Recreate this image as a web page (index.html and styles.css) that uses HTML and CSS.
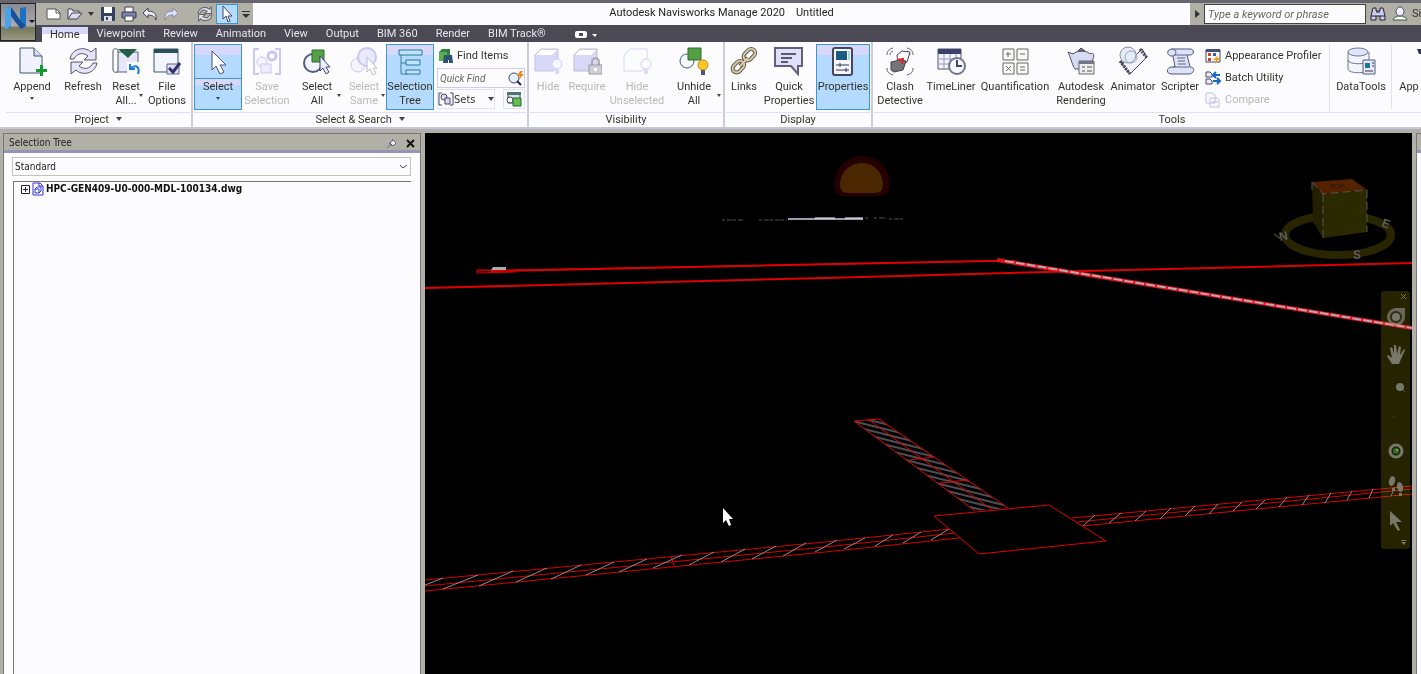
FILE: index.html
```html
<!DOCTYPE html>
<html lang="en">
<head>
<meta charset="utf-8">
<title>Autodesk Navisworks Manage 2020 - Untitled</title>
<link rel="stylesheet" href="styles.css">
</head>
<body>
<div class="app">
  <header class="top">
    <button class="logo" aria-label="Application menu">
      <svg width="34" height="34" viewBox="0 0 34 34"><path d="M4 3l6-1 9 13V3l6-1v19l-5 3-10-13v11l-6 3z" fill="#1f6fc4"/><path d="M4 3l6-1v19l-6 4z" fill="#4aa3e8"/><path d="M10 2l9 13 6 6-5 3L10 11z" fill="#165199"/><path d="M28 15h6l-3 3z" fill="#111"/></svg>
    </button>
    <div class="titlebar">
      <div class="quick">
        <button aria-label="New"><svg width="16" height="16" viewBox="0 0 16 16"><path d="M1 3h9l4 4v6H1z" fill="#fff" stroke="#555"/><path d="M10 3v4h4" fill="none" stroke="#555"/></svg></button>
        <button aria-label="Open"><svg width="16" height="16" viewBox="0 0 16 16"><path d="M1 13V3h4l1 2h6v2" fill="#eef" stroke="#445"/><path d="M1 13l4-6h10l-5 6z" fill="#dde" stroke="#445"/></svg></button>
        <button class="narrow" aria-label="Open options"><svg width="6" height="4" viewBox="0 0 6 4"><path d="M0 0h6L3 4z" fill="#333"/></svg></button>
        <button aria-label="Save"><svg width="16" height="16" viewBox="0 0 16 16"><path d="M1 1h14v14H1z" fill="#33405e"/><path d="M4 1h8v6H4z" fill="#fff"/><path d="M4 10h8v5H4z" fill="#dde"/><path d="M6 11h2v3H6z" fill="#33405e"/></svg></button>
        <button aria-label="Print"><svg width="16" height="16" viewBox="0 0 16 16"><path d="M4 6V1h8v5" fill="#fff" stroke="#445"/><rect x="1" y="6" width="14" height="6" rx="1" fill="#7b86b0" stroke="#334"/><path d="M4 10h8v5H4z" fill="#fff" stroke="#445"/></svg></button>
        <button aria-label="Undo"><svg width="16" height="16" viewBox="0 0 16 16"><path d="M1 7l5-5v3c6 0 9 3 8 9-1-3-3-5-8-5v3z" fill="#e8e8ff" stroke="#444"/></svg></button>
        <button aria-label="Redo"><svg width="16" height="16" viewBox="0 0 16 16"><path d="M15 7l-5-5v3C4 5 1 8 2 14c1-3 3-5 8-5v3z" fill="#ddf" stroke="#8a8a98"/></svg></button>
        <button class="spaced" aria-label="Refresh"><svg width="16" height="16" viewBox="0 0 30 30"><path d="M2 13C4 2 17 0 23 6l4-4v12H15l4-4C14 6 8 7 6 13zM28 17C26 28 13 30 7 24l-4 4V16h12l-4 4c5 4 11 3 13-3z" fill="#e4e4f8" stroke="#666" stroke-width="2"/></svg></button>
        <button class="active" aria-label="Select"><svg width="16" height="18" viewBox="0 0 16 18"><path d="M4 1v13l3-3 2 6 2-1-2-5h4z" fill="#fff" stroke="#446"/></svg></button>
        <button class="narrow" aria-label="Customize toolbar"><svg width="8" height="7" viewBox="0 0 8 7"><path d="M0 0h8v1H0zM0 3h8L4 7z" fill="#333"/></svg></button>
      </div>
      <h1>Autodesk Navisworks Manage 2020 &nbsp;&nbsp; Untitled</h1>
      <div class="help">
        <button class="expand" aria-label="Collapse search"><svg width="5" height="8" viewBox="0 0 5 8"><path d="M0 0l5 4-5 4z" fill="#333"/></svg></button>
        <input type="text" aria-label="Search help" placeholder="Type a keyword or phrase">
        <button aria-label="Search"><svg width="16" height="16" viewBox="0 0 16 16"><path d="M3 2h3v3h4V2h3l2 8v4h-5v-4H6v4H1v-4z" fill="#cce" stroke="#223"/><path d="M1 10h5M10 10h5M6 6h4" stroke="#223"/></svg></button>
        <button class="sign" aria-label="Sign in"><svg width="16" height="16" viewBox="0 0 16 16"><path d="M1 14c0-3 4-3 5-4h4c1 1 5 1 5 4z" fill="#fff" stroke="#375a44"/><ellipse cx="8" cy="5.500" rx="4" ry="4.500" fill="#eef" stroke="#446"/></svg><span>Si</span></button>
      </div>
    </div>
    <nav class="tabs">
      <button class="current">Home</button><button>Viewpoint</button><button>Review</button><button>Animation</button><button>View</button><button>Output</button><button>BIM 360</button><button>Render</button><button>BIM Track®</button>
      <button class="display-mode" aria-label="Ribbon display"><svg width="22" height="8" viewBox="0 0 22 8"><rect y="1" width="12" height="7" rx="2" fill="#fff"/><rect x="4" y="3" width="4" height="3" fill="#4a4954"/><path d="M17 4h5l-2 3z" fill="#fff"/></svg></button>
    </nav>
  </header>

  <div class="ribbon">
    <section class="group">
      <div class="tools">
        <button class="tool w52"><svg viewBox="0 0 30 30"><path d="M3 2h14l8 8v17H3z" fill="#f0f2ff" stroke="#3b5870"/><path d="M17 2v8h8" fill="#d8d8ff" stroke="#3b5870"/><path d="M23 19h3v4h4v3h-4v4h-3v-4h-4v-3h4z" fill="#159a2c"/></svg><span>Append</span><i class="caret"></i></button>
        <button class="tool w50"><svg viewBox="0 0 30 30"><path d="M2 13C4 2 17 0 23 6l5-4v12H16l4-4C15 6 9 7 6 13zM29 17C27 28 14 30 8 24l-5 4V16h12l-4 4c5 4 11 3 14-3z" fill="#e4e4f8" stroke="#555566"/></svg><span>Refresh</span></button>
        <button class="tool w36"><svg viewBox="0 0 30 30"><path d="M5 6h22v20H5z" fill="#e6e8fa" stroke="#52607a"/><path d="M2 24V5c0-3 5-3 5 0v19c0 3-5 3-5 0z" fill="#fff" stroke="#445070"/><path d="M7 3h19l-9 9z" fill="#236045"/><path d="M16 16h14v14H16z" fill="#fbfbff"/><path d="M20 22c6-4 9 0 7 6M19 18v5h5" fill="none" stroke="#187bd8" stroke-width="2"/></svg><span>Reset<br>All...</span><i class="caret side"></i></button>
        <button class="tool w46"><svg viewBox="0 0 30 30"><path d="M2 3h24v23H2z" fill="#f4f4ff" stroke="#385868"/><path d="M2 3h24v4H2z" fill="#28505c"/><path d="M15 18h12v10H15z" fill="#ddddf6" stroke="#667"/><path d="M17 22l4 4 7-9" fill="none" stroke="#303070" stroke-width="3"/></svg><span>File<br>Options</span></button>
      </div>
      <button class="caption">Project <i class="caret"></i></button>
    </section>

    <section class="group">
      <div class="tools">
        <button class="tool w48 on split"><svg viewBox="0 0 30 30"><path d="M9 5v19l4-4 4 8 4-2-4-7h6z" fill="#fff" stroke="#505078"/></svg><span>Select</span><i class="caret"></i></button>
        <button class="tool w50" disabled><svg viewBox="0 0 30 30"><path d="M7 3H2v25h5M23 3h5v25h-5" fill="none" stroke="#c8c8f4" stroke-width="2"/><circle cx="10" cy="16" r="5" fill="#f4f4ff" stroke="#c8c8f0"/><path d="M9 18h10v9H9z" fill="#eeeeff" stroke="#c8c8f0"/><circle cx="20" cy="10" r="4" fill="#fff" stroke="#c8c8f0" stroke-width="3"/></svg><span>Save<br>Selection</span></button>
        <button class="tool w50"><svg viewBox="0 0 30 30"><circle cx="11" cy="17" r="9" fill="#f4f4ff" stroke="#506078" stroke-width="2"/><path d="M10 4h12v12H10z" fill="#55a045" stroke="#2c6b2c"/><path d="M18 10v15l3-3 3 6 3-2-3-5h4z" fill="#eef" stroke="#404078"/></svg><span>Select<br>All</span><i class="caret side"></i></button>
        <button class="tool w44" disabled><svg viewBox="0 0 30 30"><circle cx="9" cy="19" r="7" fill="#f4f4ff" stroke="#c8c8f0"/><circle cx="18" cy="11" r="9" fill="#eaeaff" stroke="#c8c8f0" stroke-width="2"/><path d="M18 11v15l3-3 3 6 3-2-3-5h4z" fill="#fff" stroke="#bbc"/></svg><span>Select<br>Same</span><i class="caret side"></i></button>
        <button class="tool w48 on"><svg viewBox="0 0 30 30"><path d="M6 9v19h7M6 17h7" fill="none" stroke="#3580a0"/><path d="M4 4h23v5H4zM11 14h14v5H11zM11 24h14v4H11z" fill="#bfe4fb" stroke="#287ba0"/></svg><span>Selection<br>Tree</span></button>
        <div class="finder">
          <button class="row"><svg viewBox="0 0 16 16"><path d="M2 4l3-3h8v9l-3 3H2z" fill="#2f8140"/><path d="M2 4h8v9H2z" fill="#58b052"/><path d="M7 7h3l1 2 1-2h3l1 8h-4v-3h-1v3H6z" fill="#2c5078"/></svg>Find Items</button>
          <label class="quickfind"><input type="text" aria-label="Quick Find" placeholder="Quick Find"><svg viewBox="0 0 16 16"><circle cx="6" cy="8" r="5" fill="#e4f2ff" stroke="#446"/><path d="M9 11l4 4" stroke="#225" stroke-width="2"/><path d="M12 1l-3 5h3l-1 4 5-6h-3l2-3z" fill="#f08a18"/></svg></label>
          <div class="sets">
            <button class="setsbox"><svg viewBox="0 0 16 16"><path d="M4 2H1v12h3M12 2h3v12h-3" fill="none" stroke="#446"/><circle cx="6" cy="6" r="3" fill="#dde" stroke="#446"/><path d="M7 7h5v6H7z" fill="#dde" stroke="#446"/></svg>Sets<i class="caret"></i></button>
            <button class="manage" aria-label="Manage sets"><svg viewBox="0 0 16 16"><path d="M2 2h12v10H2z" fill="#dde" stroke="#446"/><path d="M1 1h14v3H1z" fill="#4a7870"/><circle cx="4" cy="9" r="3" fill="#fff" stroke="#446"/><path d="M7 7h8v8H7z" fill="#63bd50" stroke="#256b30"/></svg></button>
          </div>
        </div>
      </div>
      <button class="caption">Select &amp; Search <i class="caret"></i></button>
    </section>

    <section class="group">
      <div class="tools">
        <button class="tool w36" disabled><svg viewBox="0 0 30 30"><path d="M2 9l6-6h17v16l-5 6H2z" fill="#d8d8f8" stroke="#c4c4de"/><path d="M3 9l5-5h16l-5 5z" fill="#fff"/><circle cx="24" cy="18" r="5" fill="#f6f6ff" stroke="#d0d0f4"/><path d="M22 23h4v5h-4z" fill="#d6d6f8"/></svg><span>Hide</span></button>
        <button class="tool w42" disabled><svg viewBox="0 0 30 30"><path d="M2 9l6-6h17v16l-5 6H2z" fill="#d8d8f8" stroke="#bdbdcc"/><path d="M3 9l5-5h16l-5 5z" fill="#fff"/><path d="M20 20v-4c0-5 7-5 7 0v4" fill="none" stroke="#aaa" stroke-width="2"/><path d="M17 19h13v9H17z" fill="#d0d0dc" stroke="#999"/><path d="M22 22h3v3h-3z" fill="#fff"/></svg><span>Require</span></button>
        <button class="tool w58" disabled><svg viewBox="0 0 30 30"><path d="M2 9l6-6h17v16l-5 6H2z" fill="#fcfcff" stroke="#d4d4fa"/><circle cx="24" cy="18" r="5" fill="#fcfcff" stroke="#d0d0f4"/><path d="M22 23h4v5h-4z" fill="#dcdcf8"/></svg><span>Hide<br>Unselected</span></button>
        <button class="tool w56"><svg viewBox="0 0 30 30"><circle cx="8" cy="15" r="7" fill="#f4f8ff" stroke="#446070"/><path d="M9 2h13v12H9z" fill="#55a045" stroke="#2c6b2c"/><circle cx="24" cy="19" r="5" fill="#ffc928" stroke="#c88510"/><path d="M22 24h4v5h-4z" fill="#555570"/></svg><span>Unhide<br>All</span><i class="caret side"></i></button>
      </div>
      <div class="caption">Visibility</div>
    </section>

    <section class="group">
      <div class="tools">
        <button class="tool w36"><svg viewBox="0 0 30 30"><g fill="none" stroke="#5d584c" stroke-width="4"><rect x="14" y="5" width="13" height="8" rx="4" transform="rotate(-45 20 9)"/><rect x="3" y="17" width="13" height="8" rx="4" transform="rotate(-45 9 21)"/><path d="M11 20l8-8"/></g><g fill="none" stroke="#d9ccaa" stroke-width="2"><rect x="14" y="5" width="13" height="8" rx="4" transform="rotate(-45 20 9)"/><rect x="3" y="17" width="13" height="8" rx="4" transform="rotate(-45 9 21)"/><path d="M11 20l8-8"/></g></svg><span>Links</span></button>
        <button class="tool w54"><svg viewBox="0 0 30 30"><path d="M1 2h27v18h-4v8l-7-8H1z" fill="#e0e0f8" stroke="#60607c" stroke-width="2"/><path d="M7 8h15M7 12h11M7 16h7" stroke="#5b5b78" stroke-width="2"/></svg><span>Quick<br>Properties</span></button>
        <button class="tool w54 on"><svg viewBox="0 0 30 30"><rect x="5" y="2" width="19" height="27" rx="2" fill="#f6f6ff" stroke="#44465c" stroke-width="2"/><path d="M8 5h11v9H8z" fill="#1a5d82"/><path d="M20 5h2v9h-2z" fill="#a8d8ee"/><path d="M8 19h13M8 24h13M12 17v4M18 22v4" stroke="#333350"/></svg><span>Properties</span></button>
      </div>
      <div class="caption">Display</div>
    </section>

    <section class="group wide">
      <div class="tools">
        <button class="tool w52"><svg viewBox="0 0 30 30"><path d="M2 9c0-4 2-6 6-7M5 9c0-2 1-3 3-4M22 2c4 1 6 3 6 7M22 5c2 1 3 2 3 4M2 22c0 4 2 6 6 7M28 22c0 4-2 6-6 7" fill="none" stroke="#555570"/><path d="M12 9l5-4 8 1-3 10-9 3z" fill="#fff" stroke="#446"/><path d="M6 16l9-2 6 1-3 9-9 2-3-2z" fill="#73737c" stroke="#444"/><path d="M12 14l6-1-1 5" fill="none" stroke="#d22" stroke-width="2"/></svg><span>Clash<br>Detective</span></button>
        <button class="tool w50"><svg viewBox="0 0 30 30"><path d="M2 3h23v20H2z" fill="#f3f3ff" stroke="#556"/><path d="M2 3h23v5H2z" fill="#3c426c"/><path d="M2 13h23M2 18h23M8 8v15M14 8v15M20 8v15" stroke="#9a9ab8"/><circle cx="21" cy="20" r="8" fill="#f5f8ff" stroke="#74788c" stroke-width="2"/><path d="M21 14v6h5" fill="none" stroke="#446" stroke-width="2"/></svg><span>TimeLiner</span></button>
        <button class="tool w78"><svg viewBox="0 0 30 30"><g fill="#fafafa" stroke="#66665c"><path d="M3 3h11v11H3zM17 3h11v11H17zM3 17h11v11H3zM17 17h11v11H17z"/><path d="M6 8h5M8 6v5M20 8h5M6 20l5 5M11 20l-5 5M20 21h5M20 24h5"/></g></svg><span>Quantification</span></button>
        <button class="tool w54"><svg viewBox="0 0 30 30"><path d="M2 6l5 2c4-4 14-4 17 0 5-3 5 5 0 9l-4 6H9C6 19 6 15 2 6z" fill="#d8daf0" stroke="#4c5064"/><path d="M12 5l3-3 4 3z" fill="#777d98" stroke="#445"/><path d="M13 15h15v13H13z" fill="#eee" stroke="#666678"/><path d="M13 15h15v3H13z" fill="#74748a"/><path d="M16 21h3M21 21h5M16 25h3M21 25h5" stroke="#555"/></svg><span>Autodesk<br>Rendering</span></button>
        <button class="tool w50"><svg viewBox="0 0 30 30"><path d="M14 13L24 3l5 8-17 17-9-11z" fill="#f2f2ff" stroke="#44465c"/><path d="M2 15l10 13M22 3l7 9" stroke="#445" stroke-width="3" stroke-dasharray="2 1"/><circle cx="10" cy="9" r="8" fill="#e4ecfa" stroke="#8b94a8"/><circle cx="13" cy="11" r="6" fill="none" stroke="#9ba4ba"/></svg><span>Animator</span></button>
        <button class="tool w44"><svg viewBox="0 0 30 30"><path d="M7 3h18c5 0 4 6 0 6h-3l3 12c6 0 4 7-1 7H7c-6 0-6-6-1-7h4L8 10H6C1 9 2 3 7 3z" fill="#e0e2fa" stroke="#4d5878"/><path d="M7 3c5 0 5 6 1 7M22 9H9M24 21H8M12 12h8M13 15h7M13 18h8" fill="none" stroke="#596480"/></svg><span>Scripter</span></button>
        <div class="stack">
          <button class="row"><svg viewBox="0 0 16 16"><path d="M1 2h14v12H1z" fill="#fff" stroke="#445"/><path d="M1 1h14v3H1z" fill="#445070"/><path d="M3 5h3v3H3zM3 10h3v3H3z" fill="#d04030"/><path d="M8 5h3v3H8z" fill="#3858b8"/><path d="M13 7l-5 5h3l-1 4 5-6h-3z" fill="#f49a20"/></svg>Appearance Profiler</button>
          <button class="row"><svg viewBox="0 0 16 16"><path d="M1 2h4l2 2v3H1zM1 9h4l2 2v3H1z" fill="#eef" stroke="#446"/><path d="M15 5H9m2-3L8 5l3 3M8 11h6m-2-3l3 3-3 3" fill="none" stroke="#1767c8" stroke-width="2"/></svg>Batch Utility</button>
          <button class="row" disabled><svg viewBox="0 0 16 16"><path d="M1 1h7l2 2v8H1zM5 6h7l2 2v7H5z" fill="#f8f8ff" stroke="#c4c4d8"/><path d="M7 10h5" stroke="#ccf" stroke-width="2"/></svg>Compare</button>
        </div>
        <button class="tool w60"><svg viewBox="0 0 30 30"><path d="M2 6v17c0 5 21 5 21 0V6" fill="#f4f6ff" stroke="#6c7890"/><path d="M2 14c0 5 21 5 21 0" fill="none" stroke="#6c7890"/><ellipse cx="12" cy="6" rx="10" ry="4" fill="#e0e6fa" stroke="#6c7890"/><path d="M17 14h12v14H17z" fill="#e8e8f8" stroke="#555b78"/><path d="M19 17h5v5h-5z" fill="#187a98"/><path d="M26 17h2M26 20h2M19 25h8" stroke="#335"/></svg><span>DataTools</span></button>
        <button class="tool w36 edge"><svg viewBox="0 0 30 30"><path d="M23 3h7v5h-5z" fill="#335"/></svg><span>App</span></button>
      </div>
      <div class="caption">Tools</div>
    </section>
  </div>

  <main class="work">
    <aside class="dock">
      <h2>Selection Tree
        <span class="actions">
          <button aria-label="Auto hide"><svg width="11" height="11" viewBox="0 0 11 11"><path d="M1 10l3-3M3 5l3 3M4 5l3-3 3 3-3 3zM6 1l4 4" fill="#eee" stroke="#667"/></svg></button>
          <button aria-label="Close"><svg width="9" height="9" viewBox="0 0 9 9"><path d="M1 1l7 7M8 1L1 8" stroke="#111" stroke-width="2"/></svg></button>
        </span>
      </h2>
      <div class="selectwrap"><select aria-label="Tree view"><option>Standard</option><option>Compact</option><option>Properties</option></select><svg width="9" height="6" viewBox="0 0 9 6"><path d="M1 1l3 3 4-3" fill="none" stroke="#446"/></svg></div>
      <ul class="tree">
        <li><svg width="9" height="9" viewBox="0 0 9 9"><path d="M.5.500h8v8h-8zM2 4.500h5M4.500 2v5" fill="none" stroke="#222"/></svg><svg width="12" height="14" viewBox="0 0 12 14"><path d="M1 1h7l3 3v9H1z" fill="#fff" stroke="#3434d8"/><path d="M7 1v3h4" fill="none" stroke="#3434d8"/><path d="M3 7l2-2h4v4l-2 2H3zM3 7h4v4" fill="none" stroke="#3434d8"/></svg><span>HPC-GEN409-U0-000-MDL-100134.dwg</span></li>
      </ul>
    </aside>

    <div class="viewport">
      <svg class="scene" viewBox="0 0 987 541" preserveAspectRatio="xMinYMin slice" role="img" aria-label="3D model">
        <defs><pattern id="hatch" width="20" height="5" patternUnits="userSpaceOnUse" patternTransform="rotate(14)"><path d="M0 1h20" stroke="#9c9cac"/></pattern></defs>
        <path d="M409 51c0-15 12-28 28-28s28 13 28 28c0 9-4 12-12 12h-32c-8 0-12-3-12-12z" fill="#240000"/>
        <path d="M415 50c1-11 10-20 22-20s20 9 21 20c0 7-2 10-9 10h-25c-7 0-9-3-9-10z" fill="#4a2700"/>
        <path d="M297 87h21M334 87h28M440 85h5M449 85h12M464 86h14" stroke="#55555c" stroke-dasharray="3 2 5 1"/>
        <path d="M363 86h75" stroke="#9a9ab0" stroke-width="2"/><path d="M390 85h20M420 85h18" stroke="#fff"/>
        <g fill="none" stroke="#e00000">
          <path d="M52 137h14M52 137v3l39-1M52 138l39-1L575 128l18 1"/>
          <path d="M66 138L560 128h30" stroke-width="2"/>
          <path d="M0 155L400 145 660 138 987 130" stroke-width="2"/>
        </g>
        <path d="M66 137l2-3h13v3z" fill="#aaaab4"/>
        <path d="M572 127L987 195" stroke="#e01018" stroke-width="4"/><path d="M580 128L987 195" stroke="#b8a8b4" stroke-width="2" stroke-dasharray="9 2"/>
        <path d="M429 288l25-2 129 89-33 3z" fill="url(#hatch)"/>
        <path d="M429 288l25-2 129 89M429 288l121 90M444 287l123 90M485 327l23-3M515 350l28-3" fill="none" stroke="#e00000"/>
        <path d="M0 447L400 409 525 396M0 453L400 414 530 400M0 458L400 419 534 405M246 423l3 10M647 385l340-32M652 389l335-33M657 393l330-32" fill="none" stroke="#d80000"/>
        <path d="M0 452l18-7M18 456l35-14M54 453l34-15M91 449l31-14M126 446l30-14M161 442l28-13M194 439l28-13M228 435l29-13M264 432l25-13M296 429l24-13M327 426l24-13M358 423l23-13M390 419l22-12M419 416l21-11M450 413l18-11M478 410l18-11M506 407l18-11M658 393l12-11M684 390l12-10M710 388l11-10M735 386l11-11M760 383l10-10M784 381l9-10M808 378l9-9M831 376l9-9M854 374l8-10M877 372l7-10M900 370l6-10M922 367l5-9M944 365l4-9M966 363l4-9" fill="none" stroke="#8c8c9a"/>
        <path d="M509 383l115-11 57 36-127 13z" fill="#000" stroke="#e00000"/>
        <path d="M298 375v15l3-3 3 6 2-1-2-6h4z" fill="#fff"/>
      </svg>
      <svg class="cube" width="130" height="90" viewBox="0 0 130 90" role="img" aria-label="View cube">
        <ellipse cx="66" cy="60" rx="53" ry="20" fill="none" stroke="#282600" stroke-width="8"/>
        <path d="M40 7l11 12v44L41 47z" fill="#222000"/><path d="M51 19l44-4v42l-44 6z" fill="#2b2900"/><path d="M40 7l40-3 15 11-44 4z" fill="#552200"/>
        <path d="M40 7l11 12 44-4M51 19v44M95 15v42M40 7v12" fill="none" stroke="#55555a" stroke-dasharray="8 4"/>
        <text x="58" y="14" font-size="7" fill="#2a1800">TOP</text>
        <g font-size="12" font-weight="bold" fill="#5c5c60"><text transform="translate(8 66) rotate(-12)">N</text><text transform="translate(109 51) rotate(20)">E</text><text x="81" y="84">S</text></g>
        <path d="M2 59l7 5" stroke="#3b391c" stroke-width="2"/>
      </svg>
      <nav class="navbar" aria-label="Navigation bar">
        <button class="h10" aria-label="Close"><svg width="5" height="5" viewBox="0 0 5 5"><path d="M0 0l5 5M5 0L0 5" stroke="#77775c"/></svg></button>
        <button class="h32" aria-label="Steering wheel"><svg width="20" height="20" viewBox="0 0 20 20"><path d="M10 1h9v9a9 9 0 1 1-9-9z" fill="#68685a"/><circle cx="10" cy="10" r="5" fill="#77776a" stroke="#2e2c10" stroke-width="2"/></svg></button>
        <button class="h44" aria-label="Pan"><svg width="20" height="20" viewBox="0 0 20 20"><path d="M6 19l-5-8 1-1 4 3-2-10 2-1 2 7V0h2l1 9 2-8 2 1-1 8 4-6 1 1-4 9-2 5z" fill="#77776a"/></svg></button>
        <button class="h20 right" aria-label="Zoom"><svg width="12" height="10" viewBox="0 0 12 10"><circle cx="6" cy="5" r="4" fill="#77776a"/><path d="M9 8l2 2" stroke="#555540"/></svg></button>
        <button class="h40" aria-label="Zoom options"><svg width="6" height="2" viewBox="0 0 6 2"><path d="M0 1h2" stroke="#444420"/></svg></button>
        <button class="h28" aria-label="Orbit"><svg width="18" height="18" viewBox="0 0 18 18"><circle cx="9" cy="9" r="6" fill="#152508" stroke="#77776a" stroke-width="3"/><circle cx="9" cy="9" r="3" fill="#3b6620"/><circle cx="10" cy="8" r="1" fill="#9a9"/></svg></button>
        <button class="h42" aria-label="Walk"><svg width="18" height="20" viewBox="0 0 18 20"><ellipse cx="5" cy="5" rx="3" ry="5" transform="rotate(15 5 5)" fill="#77776a"/><ellipse cx="13" cy="11" rx="3" ry="5" transform="rotate(-15 13 11)" fill="#77776a"/><path d="M5 12h3v3H5zM12 17h3v3h-3z" fill="#77776a"/></svg></button>
        <button class="h28" aria-label="Select"><svg width="14" height="20" viewBox="0 0 14 20"><path d="M1 0v15l3-3 5 8 2-1-4-8h6z" fill="#77776a"/></svg></button>
        <button class="h14" aria-label="More"><svg width="5" height="5" viewBox="0 0 5 5"><path d="M0 0h5v1H0zM0 2h5L3 5z" fill="#77775c"/></svg></button>
      </nav>
    </div>
    <aside class="dock next"><h2></h2></aside>
  </main>
</div>
</body>
</html>
```
FILE: styles.css
```css
* { box-sizing: border-box; }
body { margin: 0; font: 11px/14px Roboto, "Noto Sans", sans-serif; color: #33332b; }
button { font: inherit; color: inherit; background: none; border: 0; padding: 0; margin: 0; }
svg { flex: none; display: block; }
h1, h2 { margin: 0; font-weight: 400; font-size: 11px; }
.app { display: flex; flex-direction: column; height: 100vh; overflow: hidden; background: #b0b0a6; }

.top { display: grid; grid-template: 22px 17px / 36px 1fr; background: #4a4954; border-top: 3px solid #66666e; flex: none; }
.logo { grid-row: 1 / 3; background: linear-gradient(#8b8b90, #aaaab0 60%, #77775c 66%, #9a9a86); border: 1px solid #222; margin-bottom: 1px; overflow: hidden; }
.titlebar { display: flex; background: #fcfcff; min-width: 0; }
.quick { display: flex; align-items: center; background: #b0b0a6; width: 217px; padding-left: 9px; gap: 4px; }
.quick button { width: 17px; height: 20px; display: flex; align-items: center; justify-content: center; }
.quick .narrow { width: 8px; }
.quick .spaced { margin-left: 13px; }
.quick .active { background: #b4daff; border: 1px solid #3c96c8; width: 22px; margin-left: -1px; }
h1 { flex: 1; text-align: center; line-height: 20px; white-space: nowrap; color: #222; }
.help { display: flex; background: #b0b0a6; align-items: center; }
.help button { display: flex; align-items: center; gap: 4px; margin-left: 4px; }
.help .expand { margin: 0; width: 14px; height: 20px; justify-content: center; }
.help input { width: 162px; height: 20px; border: 1px solid #44443c; background: #fcfcff; font: italic 11px Roboto, sans-serif; padding: 0 3px; }
.help .sign { width: 29px; white-space: nowrap; margin-left: 6px; }
input::placeholder { color: #66665e; opacity: 1; }

.tabs { display: flex; padding-left: 6px; color: #e6e6ec; white-space: nowrap; }
.tabs button { padding: 0 9px; line-height: 16px; }
.tabs .current { background: linear-gradient(#d8d8fc 50%, #fcfcff 50%); color: #33332b; padding: 0 8px; margin-top: 2px; line-height: 14px; }
.tabs .display-mode { padding-left: 20px; }

.ribbon { display: flex; height: 87px; background: #fcfcff; flex: none; overflow: hidden; border-bottom: 2px solid #c4c4e0; }
.group { flex: none; display: flex; flex-direction: column; border-right: 2px solid #ccccda; padding: 2px 1px 0; }
.group:first-child { padding-left: 6px; }
.wide { width: 600px; }
.tools { display: flex; height: 68px; }
.tool { position: relative; height: 66px; display: flex; flex-direction: column; align-items: center; padding-top: 1px; border: 1px solid transparent; white-space: nowrap; flex: none; line-height: 14px; }
.tool svg { width: 30px; height: 30px; margin-bottom: 4px; }
.tool:disabled, .row:disabled { color: #b8b8b8; }
.tool.on { background: linear-gradient(#d8d8fc 16%, #b4daff 16%); border-color: #3c96c8; }
.tool.split { background: linear-gradient(#d8d8fc 10px, #b4daff 10px 33px, #3c96c8 33px 34px, #d8d8fc 34px 40px, #b4daff 40px); }
.caret { display: inline-block; border: solid transparent; border-width: 3px 3px 0; border-top-color: #444450; }
.tool .caret { border-width: 3px 2px 0; margin-top: 3px; }
.tool .side { position: absolute; right: 0; top: 46px; }
.w36 { width: 36px; } .w42 { width: 42px; } .w44 { width: 44px; } .w46 { width: 46px; } .w48 { width: 48px; } .w50 { width: 50px; } .w52 { width: 52px; }
.w54 { width: 54px; } .w56 { width: 56px; } .w58 { width: 58px; } .w60 { width: 60px; } .w78 { width: 78px; }
.caption { height: 15px; border-top: 1px solid #e0e0fa; text-align: center; line-height: 14px; }
.caption .caret { margin: 0 0 2px 4px; border-width: 4px 3px 0; }
.finder { width: 92px; padding: 1px 1px 0 3px; display: flex; flex-direction: column; gap: 1px; }
.row { display: flex; align-items: center; gap: 4px; height: 22px; white-space: nowrap; }
.row svg, .finder svg { width: 16px; height: 16px; }
.quickfind { display: flex; align-items: center; border: 1px solid #ccccf4; height: 20px; }
.quickfind input { width: 70px; border: 0; padding: 0 2px; background: none; font: italic 10px Roboto, sans-serif; }
.sets { display: flex; justify-content: space-between; font: 11px "DejaVu Sans Condensed", sans-serif; }
.sets button { height: 20px; border: 1px solid #e0e0fa; display: flex; align-items: center; }
.setsbox { width: 58px; }
.setsbox .caret { margin-left: auto; border-width: 4px 3px 0; }
.manage { width: 22px; justify-content: center; }
.stack { width: 128px; padding: 1px 0 0 3px; margin-right: 1px; border-right: 1px solid #e0e0fa; }
.edge { border-left-color: #e0e0fa; }

.work { flex: 1; min-height: 0; display: flex; gap: 4px; padding: 4px 0 0 3px; font-family: "DejaVu Sans Condensed", "DejaVu Sans", sans-serif; }
.dock { width: 418px; flex: none; display: flex; flex-direction: column; background: #fcfcff; border: 1px solid #77777c; border-bottom: 0; font-size: 10px; }
.dock h2 { height: 19px; padding: 2px 5px 0; background: #b0b0a6; border-bottom: 3px solid #9494b4; display: flex; justify-content: space-between; align-items: center; font-size: 10px; color: #222; }
.actions { display: flex; gap: 9px; align-items: center; }
.selectwrap { position: relative; margin: 4px 9px 5px 8px; }
.selectwrap select { display: block; width: 100%; height: 19px; border: 1px solid #c4c4b8; appearance: none; background: #fcfcff; font: inherit; padding: 0 2px; color: #222; }
.selectwrap svg { position: absolute; right: 3px; top: 7px; pointer-events: none; }
.tree { flex: 1; list-style: none; margin: 0 9px 0 9px; padding: 0 0 0 7px; border: solid #77776a; border-width: 1px 0 0 1px; }
.tree li { display: flex; align-items: center; gap: 2px; font-weight: 700; color: #111; height: 14px; }
.next { width: 5px; border-right: 0; }
.next h2 { padding: 0; }

.viewport { position: relative; flex: 1; min-width: 0; background: #000; overflow: hidden; }
.scene { position: absolute; inset: 0; width: 100%; height: 100%; }
.cube { position: absolute; right: 10px; top: 42px; font-family: "Liberation Sans", sans-serif; }
.navbar { position: absolute; right: 2px; top: 158px; width: 29px; display: flex; flex-direction: column; background: #262400; border-radius: 3px; mix-blend-mode: lighten; }
.navbar button { display: flex; align-items: center; justify-content: center; }
.navbar .h10, .navbar .h14, .navbar .right { justify-content: flex-end; padding-right: 4px; }
.h10 { height: 10px; } .h14 { height: 14px; } .h20 { height: 20px; } .h28 { height: 28px; } .h32 { height: 32px; }
.h40 { height: 40px; } .h42 { height: 42px; } .h44 { height: 44px; }
```
